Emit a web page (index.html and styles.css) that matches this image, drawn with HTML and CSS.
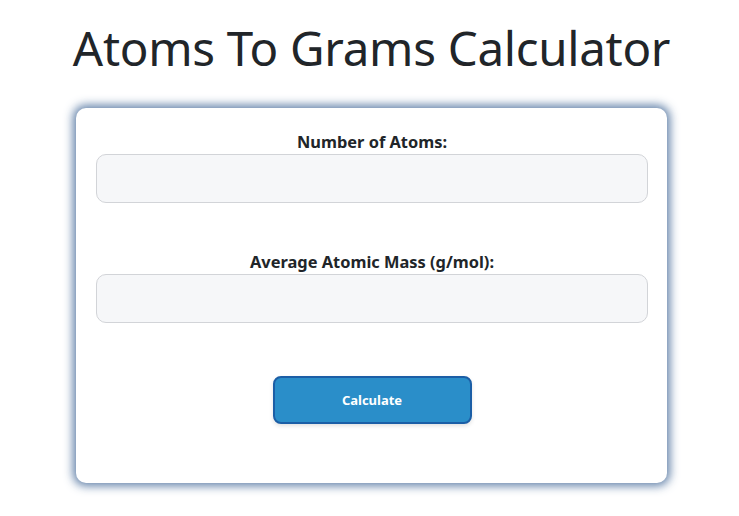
FILE: index.html
```html
<!DOCTYPE html>
<html lang="en">
<head>
<meta charset="utf-8">
<title>Atoms To Grams Calculator</title>
<link rel="stylesheet" href="styles.css">
</head>
<body>
<main class="page">
  <h1 class="title">Atoms To Grams Calculator</h1>
  <form class="card" onsubmit="return false;">
    <div class="field">
      <label class="label" for="atoms">Number of Atoms:</label>
      <input class="input" id="atoms" type="text">
    </div>
    <div class="field">
      <label class="label" for="mass">Average Atomic Mass (g/mol):</label>
      <input class="input" id="mass" type="text">
    </div>
    <div class="actions">
      <button class="button" type="button">Calculate</button>
    </div>
  </form>
</main>
</body>
</html>
```
FILE: styles.css
```css
* { box-sizing: border-box; }
html, body { margin: 0; padding: 0; background: #ffffff; }
body {
  font-family: "Noto Sans", "Open Sans", "Liberation Sans", sans-serif;
  color: #222222;
}
.page {
  display: flex;
  flex-direction: column;
  align-items: center;
  padding-top: 18px;
  padding-bottom: 30px;
}
.title {
  margin: 0 0 0 4px;
  font-size: 47.5px;
  font-weight: 400;
  line-height: 60px;
  color: #212529;
  letter-spacing: -0.3px;
}
.card {
  margin-top: 30px;
  width: 591px;
  margin-left: 4px;
  background: #ffffff;
  border-radius: 10px;
  box-shadow: 0 0 10px 3px rgba(82, 116, 160, 0.9);
  padding: 24px 19px 59px 20px;
  display: flex;
  flex-direction: column;
}
.field {
  display: flex;
  flex-direction: column;
  align-items: center;
}
.field + .field { margin-top: 49px; }
.label {
  font-size: 16.4px;
  font-weight: 700;
  line-height: 20px;
  color: #212529;
  margin-bottom: 2px;
}
.input {
  width: 100%;
  height: 49px;
  border: 1px solid #d2d4d8;
  border-radius: 10px;
  background: #f6f7f9;
  font: inherit;
}
.actions {
  display: flex;
  justify-content: center;
  margin-top: 53px;
}
.button {
  width: 199px;
  height: 48px;
  background: #2a8ec9;
  border: 2px solid #1b5ea6;
  border-radius: 8px;
  color: #ffffff;
  font-family: inherit;
  font-size: 13px;
  font-weight: 700;
  box-shadow: 0 2px 4px rgba(0, 0, 0, 0.12);
}
```
